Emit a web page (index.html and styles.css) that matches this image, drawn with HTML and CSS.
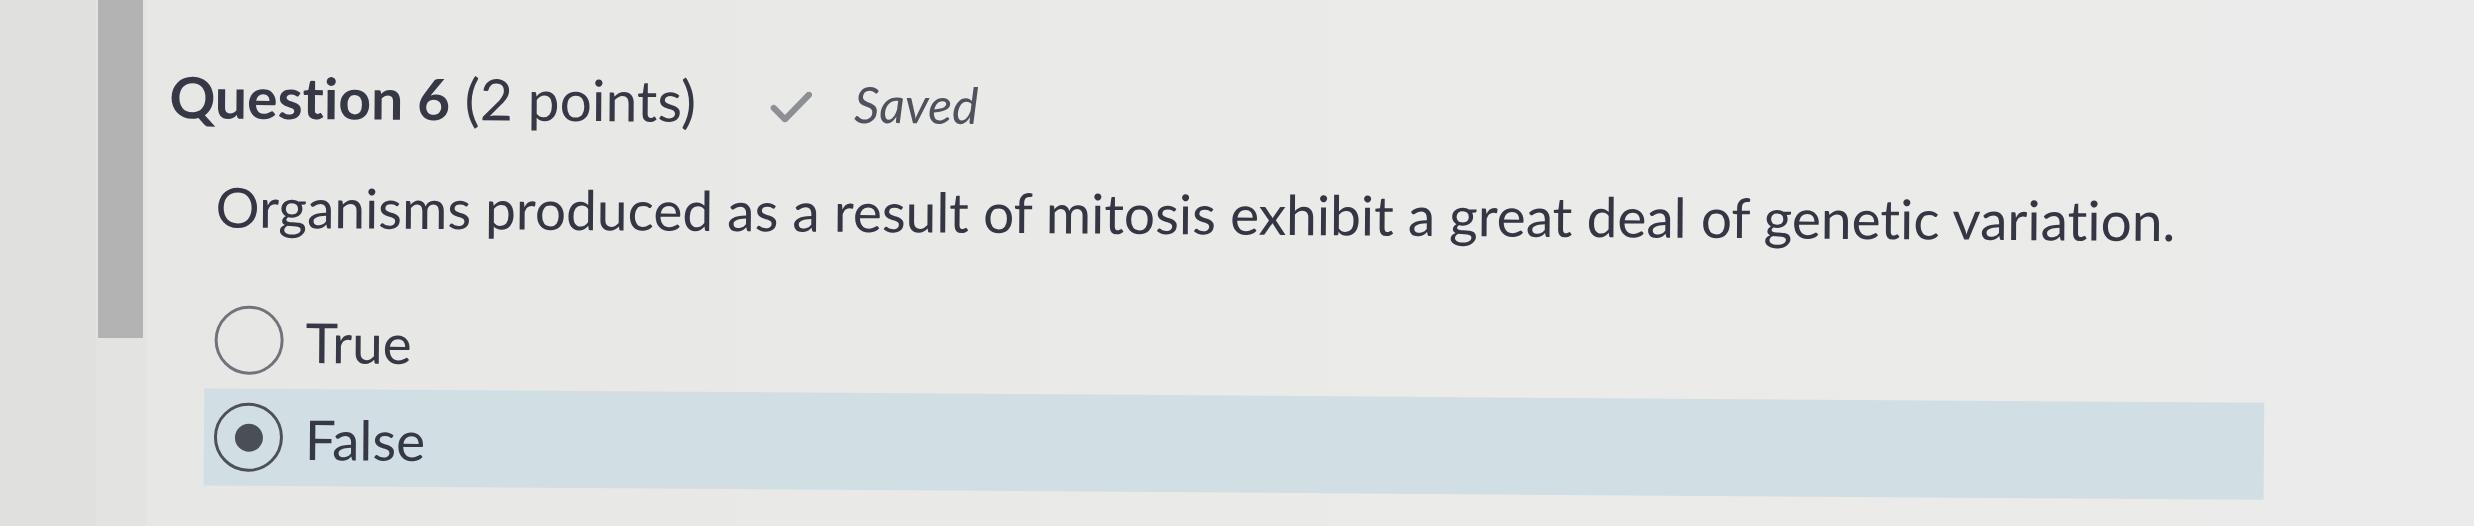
FILE: index.html
```html
<!DOCTYPE html>
<html lang="en">
<head>
    <meta charset="UTF-8">
    <meta name="viewport" content="width=device-width, initial-scale=1.0">
    <title>Quiz - Question 6</title>
    <link rel="stylesheet" href="styles.css">
</head>
<body>
    <div class="page">
        <div class="rail"></div>
        <div class="track"><div class="thumb"></div></div>
        <div class="question">
            <div class="question-head">
                <h2><b>Question 6</b> (2 points)</h2>
                <span class="saved">
                    <svg class="check" viewBox="0 0 40 30" width="42" height="31">
                        <path d="M3 16 L14 27 L37 3" fill="none" stroke="#8c9095" stroke-width="6" stroke-linecap="round" stroke-linejoin="round"/>
                    </svg>
                    <i>Saved</i>
                </span>
            </div>
            <p class="prompt">Organisms produced as a result of mitosis exhibit a great deal of genetic variation.</p>
            <div class="options">
                <label class="option">
                    <input type="radio" name="q6" value="true">
                    <span class="radio"></span>
                    <span class="option-text">True</span>
                </label>
                <label class="option selected">
                    <input type="radio" name="q6" value="false" checked>
                    <span class="radio"></span>
                    <span class="option-text">False</span>
                </label>
            </div>
        </div>
    </div>
</body>
</html>
```

FILE: styles.css
```css
body {
    margin: 0;
    height: 526px;
    overflow: hidden;
    font-family: 'Lato', 'Noto Sans', sans-serif;
    font-variant-ligatures: none;
    color: #363845;
    background: linear-gradient(90deg, #e6e6e4, #ebebe9 60%, #eaebea);
}
.page {
    display: flex;
    height: 100%;
}
.rail {
    width: 96px;
    flex: none;
    background-color: #e0e0de;
}
.track {
    width: 50px;
    flex: none;
    background-color: #e3e3e1;
}
.thumb {
    height: 338px;
    margin-left: 2px;
    margin-right: 3px;
    background-color: #b3b3b3;
}
/* the question card sits a touch off-level on this screen */
.question {
    flex: 1;
    padding-left: 24px;
    transform: rotate(0.4deg);
    transform-origin: 0 0;
}
.question-head {
    display: flex;
    align-items: baseline;
    margin-top: 62px;
}
h2 {
    margin: 0;
    font-size: 57px;
    font-weight: 400;
    line-height: 1.2;
}
h2 b {
    font-weight: 700;
}
.saved {
    display: flex;
    align-items: baseline;
    margin-left: 74px;
    font-size: 50px;
    color: #4f525c;
}
.check {
    margin-right: 42px;
    align-self: center;
    position: relative;
    top: 3px;
}
.prompt {
    margin: 43px 0 0 47px;
    font-size: 55px;
    line-height: 1.2;
    color: #343644;
}
.options {
    display: flex;
    flex-direction: column;
    width: 2060px;
    margin: 52px 0 0 37px;
}
.option {
    display: flex;
    align-items: center;
    height: 97px;
    padding-left: 10px;
    font-size: 55px;
}
.option input {
    display: none;
}
.option.selected {
    background-color: #d1dee4;
}
.radio {
    width: 63px;
    height: 63px;
    flex: none;
    border: 3px solid #707379;
    border-radius: 50%;
    display: flex;
    align-items: center;
    justify-content: center;
    margin-right: 22px;
}
.option input:checked + .radio {
    border-color: #4d5058;
}
.option input:checked + .radio::after {
    content: "";
    width: 28px;
    height: 28px;
    border-radius: 50%;
    background-color: #4a4e57;
}
.option-text {
    position: relative;
    top: 1px;
}
```
